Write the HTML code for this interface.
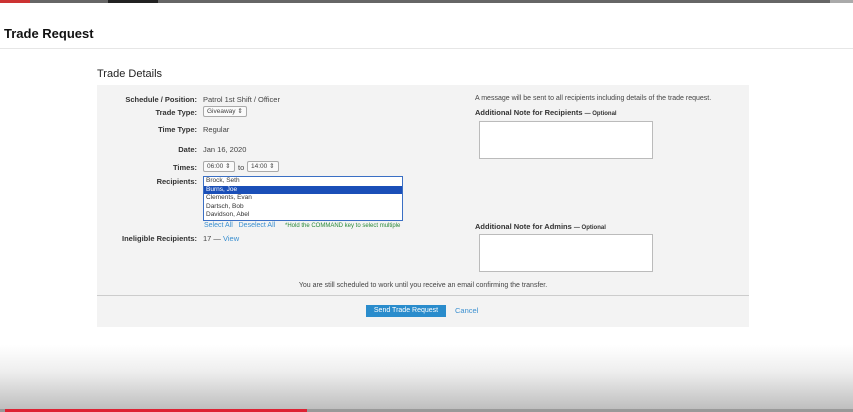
<!DOCTYPE html>
<html><head><style>
body{margin:0;width:853px;height:412px;overflow:hidden;background:#fff;font-family:"Liberation Sans",sans-serif;position:relative}
.a{position:absolute}
.lbl{position:absolute;font-size:7.5px;font-weight:bold;color:#333;text-align:right;width:100px;left:97px}
.val{position:absolute;font-size:7.5px;color:#444;left:203px}
.sel{position:absolute;border:1px solid #aaa;border-radius:2px;background:#fafafa;font-size:6.5px;color:#444;height:9px;line-height:9px;padding:0 3px}
.ta{position:absolute;border:1px solid #bbb;background:#fff;width:172px;height:36px}
</style></head><body>
<div class="a" style="left:0;top:0;width:853px;height:3px;background:#666"></div>
<div class="a" style="left:0;top:0;width:30px;height:3px;background:#c33"></div>
<div class="a" style="left:108px;top:0;width:50px;height:3px;background:#222"></div>
<div class="a" style="left:830px;top:0;width:23px;height:3px;background:#aaa"></div>
<div class="a" style="left:4px;top:26px;font-size:13px;font-weight:bold;color:#111">Trade Request</div>
<div class="a" style="left:0;top:48px;width:853px;height:1px;background:#e6e6e6"></div>
<div class="a" style="left:97px;top:68px;font-size:11px;color:#222">Trade Details</div>
<div class="a" style="left:97px;top:85px;width:652px;height:242px;background:#f3f3f3"></div>
<div class="a" style="left:97px;top:295px;width:652px;height:1px;background:#ccc"></div>
<div class="lbl" style="top:95px">Schedule / Position:</div><div class="val" style="top:95px">Patrol 1st Shift / Officer</div>
<div class="lbl" style="top:108px">Trade Type:</div><div class="sel" style="left:203px;top:106px">Giveaway ⇕</div>
<div class="lbl" style="top:125px">Time Type:</div><div class="val" style="top:125px">Regular</div>
<div class="lbl" style="top:145px">Date:</div><div class="val" style="top:145px">Jan 16, 2020</div>
<div class="lbl" style="top:163px">Times:</div><div class="sel" style="left:203px;top:161px">06:00 ⇕</div><div class="val" style="left:238px;top:163px">to</div><div class="sel" style="left:247px;top:161px">14:00 ⇕</div>
<div class="lbl" style="top:177px">Recipients:</div>
<div class="a" style="left:203px;top:176px;width:198px;height:43px;border:1px solid #3a6fc4;background:#fff;font-size:6.5px;color:#333;line-height:8.5px">
<div style="padding-left:2px">Brock, Seth</div><div style="padding-left:2px;background:#1a4fb8;color:#fff">Burns, Joe</div><div style="padding-left:2px">Clements, Evan</div><div style="padding-left:2px">Dartsch, Bob</div><div style="padding-left:2px">Davidson, Abel</div></div>
<div class="a" style="left:204px;top:222px;font-size:7px;color:#3a8fd0">Select All &nbsp; Deselect All</div>
<div class="a" style="left:285px;top:223px;font-size:6px;color:#2a8a3a">*Hold the COMMAND key to select multiple</div>
<div class="lbl" style="top:234px">Ineligible Recipients:</div><div class="val" style="top:234px">17 — <span style="color:#3a8fd0">View</span></div>
<div class="a" style="left:475px;top:95px;font-size:7px;color:#444">A message will be sent to all recipients including details of the trade request.</div>
<div class="a" style="left:475px;top:108px;font-size:7.5px;font-weight:bold;color:#333">Additional Note for Recipients <span style="font-size:6px">— Optional</span></div>
<div class="ta" style="left:479px;top:121px"></div>
<div class="a" style="left:475px;top:222px;font-size:7.5px;font-weight:bold;color:#333">Additional Note for Admins <span style="font-size:6px">— Optional</span></div>
<div class="ta" style="left:479px;top:234px"></div>
<div class="a" style="left:97px;width:652px;top:282px;text-align:center;font-size:7px;color:#444">You are still scheduled to work until you receive an email confirming the transfer.</div>
<div class="a" style="left:366px;top:305px;width:80px;height:12px;background:#2a8ccc;color:#fff;font-size:7px;line-height:12px;text-align:center">Send Trade Request</div>
<div class="a" style="left:455px;top:306px;font-size:7.5px;color:#3a8fd0">Cancel</div>
<div class="a" style="left:0;top:345px;width:853px;height:67px;background:linear-gradient(#fff,#eee 40%,#bbb)"></div>
<div class="a" style="left:0;top:409px;width:853px;height:3px;background:#999"></div>
<div class="a" style="left:5px;top:409px;width:302px;height:3px;background:#d23"></div>
</body></html>
